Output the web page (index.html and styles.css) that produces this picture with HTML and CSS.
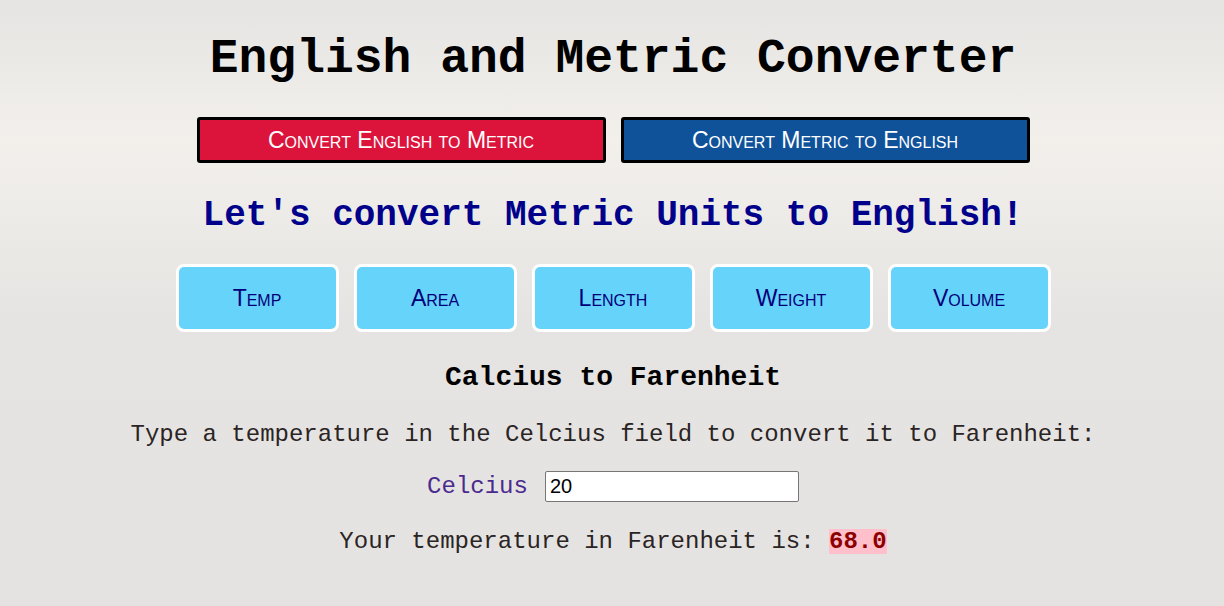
FILE: index.html
```html
<!DOCTYPE html>
<html lang="en">
<head>
  <meta charset="UTF-8" />
  <meta name="viewport" content="width=device-width, initial-scale=1.0"/>
  <title>English and Metric Converter</title>
  <link rel="stylesheet" href="styles.css">
</head>
<body>

  <div class="page">
    <h1>English and Metric Converter</h1>

    <div class="modes">
      <button class="mode-btn to-metric">Convert English to Metric</button>
      <button class="mode-btn to-english">Convert Metric to English</button>
    </div>

    <h2>Let's convert Metric Units to English!</h2>

    <div class="units">
      <button class="unit-btn">Temp</button>
      <button class="unit-btn">Area</button>
      <button class="unit-btn">Length</button>
      <button class="unit-btn">Weight</button>
      <button class="unit-btn">Volume</button>
    </div>

    <h3>Calcius to Farenheit</h3>

    <p class="hint">Type a temperature in the Celcius field to convert it to Farenheit:</p>

    <div class="field">
      <label for="celcius">Celcius</label>
      <input type="text" id="celcius" value="20" />
    </div>

    <p class="result">Your temperature in Farenheit is: <span class="answer" id="answer">68.0</span></p>
  </div>

</body>
</html>
```

FILE: styles.css
```css
body {
  margin: 0;
  min-height: 100vh;
  font-family: "Liberation Mono", "Courier New", monospace;
  background: linear-gradient(to bottom, #e5e4e2 0, #f3f0ec 140px, #e5e4e2 320px, #e4e3e1 100%);
  background-color: #e4e3e1;
}

.page {
  display: flex;
  flex-direction: column;
  align-items: center;
  padding-left: 2px;
}

h1 {
  margin: 31px 0 0;
  font-size: 48px;
  line-height: 56px;
  color: #000;
}

.modes {
  display: flex;
  gap: 15px;
  margin-top: 30px;
}

.mode-btn {
  width: 409px;
  height: 46px;
  border: 3px solid #000;
  border-radius: 3px;
  font-family: "Liberation Sans", Arial, sans-serif;
  font-size: 23px;
  font-variant: small-caps;
  color: #fff;
  cursor: pointer;
}

.to-metric {
  background: #dc143c;
}

.to-english {
  background: #10529a;
}

h2 {
  margin: 31px 0 0;
  font-size: 36px;
  line-height: 44px;
  color: #00008b;
}

.units {
  display: flex;
  gap: 15px;
  margin-top: 26px;
}

.unit-btn {
  width: 163px;
  height: 68px;
  background: #66d3fa;
  border: 3px solid #fff;
  border-radius: 8px;
  font-family: "Liberation Sans", Arial, sans-serif;
  font-size: 23px;
  font-variant: small-caps;
  color: #00007a;
  cursor: pointer;
}

h3 {
  margin: 29px 0 0;
  font-size: 28px;
  line-height: 34px;
  color: #000;
}

.hint {
  margin: 26px 0 0;
  font-size: 24px;
  line-height: 28px;
  color: #2b2424;
}

.field {
  display: flex;
  align-items: center;
  gap: 17px;
  margin-top: 22px;
}

.field label {
  font-size: 24px;
  color: #4b2a8f;
}

.field input {
  box-sizing: border-box;
  width: 254px;
  height: 31px;
  padding: 0 4px;
  border: 1px solid #767676;
  border-radius: 2px;
  font-family: "Liberation Sans", Arial, sans-serif;
  font-size: 20px;
  color: #000;
}

.result {
  margin: 26px 0 0;
  font-size: 24px;
  line-height: 28px;
  color: #2b2424;
}

.answer {
  display: inline-block;
  line-height: 25px;
  background: #ffc0cb;
  color: #8b0000;
  font-weight: bold;
}
```
